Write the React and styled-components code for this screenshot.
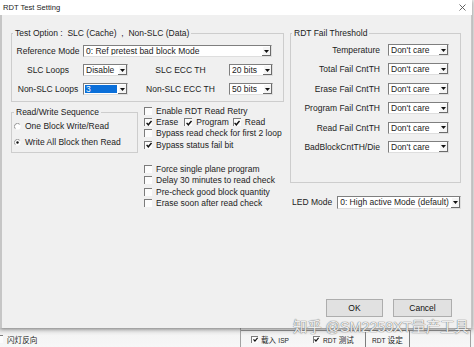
import React from "react";
import styled, { createGlobalStyle } from "styled-components";

const GlobalStyle = createGlobalStyle`
  html, body {
    margin: 0;
    padding: 0;
    background: #e9e9e9;
  }
  #root {
    width: 474px;
    height: 347px;
    overflow: hidden;
  }
`;

const uiFont = `"Liberation Sans", Arial, "Noto Sans CJK SC", sans-serif`;

const Screen = styled.div`
  position: relative;
  width: 474px;
  height: 347px;
  overflow: hidden;
  display: flex;
  flex-direction: column;
  font-family: ${uiFont};
  font-size: 8.5px;
  color: #1c1c1c;
  background: #ececec;
`;

const Dialog = styled.div`
  position: relative;
  z-index: 1;
  flex: none;
  width: 472px;
  height: 328px;
  display: flex;
  flex-direction: column;
  box-shadow: 0 1px 4px rgba(0, 0, 0, 0.45);
`;

const TitleBar = styled.div`
  height: 15px;
  background: #fff;
  display: flex;
  align-items: center;
  justify-content: space-between;
  padding: 0 6px 0 3px;
  font-size: 7.6px;
  color: #222;
`;

const Body = styled.div`
  flex: 1;
  background: #f0f0f0;
  border-left: 2px solid #c6c6c6;
  border-right: 1px solid #c6c6c6;
  padding: 13px 0 11px 9px;
  display: flex;
  flex-direction: column;
`;

const Columns = styled.div`
  display: flex;
  gap: 6px;
  align-items: flex-start;
`;

const Column = styled.div`
  width: ${(p) => p.$w}px;
  display: flex;
  flex-direction: column;
`;

const Group = styled.fieldset`
  box-sizing: border-box;
  margin: ${(p) => p.$margin || 0};
  min-width: 0;
  width: ${(p) => p.$w}px;
  border: 1px solid #cdcdcd;
  padding: ${(p) => p.$pad};
`;

const Legend = styled.legend`
  padding: 0 2px;
  font-size: 8.5px;
  line-height: 10px;
  color: #1c1c1c;
`;

const OptionGrid = styled.div`
  display: grid;
  grid-template-columns: 70px 45px 1fr 44px;
  row-gap: 7px;
  align-items: center;
`;

const GridLabel = styled.span`
  text-align: center;
  white-space: nowrap;
  padding-left: ${(p) => p.$shift || 0}px;
`;

const WideCell = styled.div`
  grid-column: 2 / 5;
`;

const LowerRow = styled.div`
  display: flex;
  gap: 6px;
  align-items: flex-start;
  margin-top: 4px;
`;

const RadioList = styled.div`
  display: flex;
  flex-direction: column;
  gap: 6.3px;
`;

const RadioRow = styled.label`
  height: 10px;
  display: flex;
  align-items: center;
  gap: 4px;
  white-space: nowrap;
`;

const CheckList = styled.div`
  display: flex;
  flex-direction: column;
  margin-top: -0.6px;
`;

const CheckRow = styled.div`
  height: 11.2px;
  display: flex;
  align-items: center;
  gap: 4px;
  white-space: nowrap;
  margin-top: ${(p) => p.$space || 0}px;
`;

const InlineCheck = styled.span`
  display: flex;
  align-items: center;
  gap: 4px;
  margin-right: ${(p) => p.$after || 0}px;
`;

const ThresholdGrid = styled.div`
  display: grid;
  grid-template-columns: 1fr 61px;
  column-gap: 8px;
  row-gap: 7.4px;
  align-items: center;
`;

const RightLabel = styled.span`
  text-align: right;
  white-space: nowrap;
`;

const LedRow = styled.div`
  display: flex;
  align-items: center;
  gap: 5px;
  margin-top: 13px;
  padding-left: 2px;
  white-space: nowrap;
`;

const LedLabel = styled.span`
  flex: none;
`;

const Footer = styled.div`
  margin-top: auto;
  display: flex;
  justify-content: flex-end;
  gap: 10px;
  padding-right: 19px;
`;

const PushButton = styled.button`
  box-sizing: border-box;
  width: ${(p) => p.$w}px;
  height: 18px;
  padding: 0;
  background: #e1e1e1;
  border: 1px solid #adadad;
  font-family: ${uiFont};
  font-size: 8.5px;
  color: #111;
`;

const ComboFrame = styled.div`
  box-sizing: border-box;
  flex: none;
  display: flex;
  width: ${(p) => p.$w}px;
  height: ${(p) => p.$h}px;
  background: #fff;
  border: 1px solid;
  border-color: #7f7f7f #dedede #dedede #7f7f7f;
`;

const ComboValue = styled.span`
  flex: 1;
  display: flex;
  align-items: center;
  margin: 1px;
  padding-left: 1px;
  white-space: nowrap;
  overflow: hidden;
  background: ${(p) => (p.$selected ? "#0b6fd9" : "transparent")};
  color: ${(p) => (p.$selected ? "#fff" : "inherit")};
`;

const DropButton = styled.span`
  flex: none;
  width: 9px;
  display: grid;
  place-items: center;
  background: #f5f5f5;
  box-shadow: inset -1px -1px #6b6b6b, inset 1px 1px #fff;
`;

const BoxFace = styled.span`
  box-sizing: border-box;
  flex: none;
  width: ${(p) => p.$size}px;
  height: ${(p) => p.$size}px;
  margin-left: ${(p) => p.$offset || 0}px;
  border-top: 1px solid #7b7b7b;
  border-left: 1px solid #7b7b7b;
  background: #fcfcfc;
  display: grid;
  place-items: center;
`;

const Under = styled.div`
  flex: 1;
  display: flex;
  background: linear-gradient(#dedede, #f4f4f4 40%, #f7f7f7);
  font-size: 7.6px;
  color: #222;
`;

const UnderLeft = styled.div`
  width: 240px;
  display: flex;
  align-items: center;
  gap: 4px;
  padding-top: 3px;
  border-right: 1px solid #a2a2a2;
`;

const UnderRight = styled.div`
  flex: 1;
  display: flex;
  align-items: center;
  margin: 2px 3px 0 0;
  padding-left: 10px;
  border-top: 1px solid #8e8e8e;
  border-right: 1px solid #a2a2a2;
`;

const UnderItem = styled.span`
  display: flex;
  align-items: center;
  gap: 3px;
  margin-right: ${(p) => p.$after}px;
  white-space: nowrap;
`;

const SmallLatin = styled.span`
  font-size: 6.6px;
`;

const TabButton = styled.span`
  box-sizing: border-box;
  align-self: stretch;
  width: 45px;
  margin-top: -1px;
  display: grid;
  place-items: center;
  background: #f6f6f6;
  border: 1px solid #7d7d7d;
  border-bottom: none;
`;

const Watermark = styled.div`
  position: absolute;
  z-index: 2;
  left: 293px;
  top: 319px;
  font-family: "Liberation Sans", "Noto Sans CJK SC", sans-serif;
  font-size: 14.3px;
  line-height: 17px;
  white-space: nowrap;
  color: rgba(255, 255, 255, 0.9);
  text-shadow: 0 0 1px #6f6f6f, 0 0 1px #6f6f6f;
`;

function Arrow() {
  return (
    <svg width="5" height="3" viewBox="0 0 5 3">
      <path d="M0 0 H5 L2.5 3 Z" fill="#111" />
    </svg>
  );
}

function Combo({ value, w, h = 12, selected }) {
  return (
    <ComboFrame $w={w} $h={h}>
      <ComboValue $selected={selected}>{value}</ComboValue>
      <DropButton>
        <Arrow />
      </DropButton>
    </ComboFrame>
  );
}

function Check({ checked, size = 8, offset }) {
  return (
    <BoxFace $size={size} $offset={offset}>
      {checked && (
        <svg width={size - 2} height={size - 2} viewBox="0 0 6 6">
          <path d="M0.6 2.9 L2.3 4.8 L5.5 0.9" fill="none" stroke="#111" strokeWidth="1.4" />
        </svg>
      )}
    </BoxFace>
  );
}

function Radio({ checked }) {
  return (
    <svg width="7" height="7" viewBox="0 0 14 14">
      <circle cx="7" cy="7" r="6.2" fill="#fff" />
      <path d="M11.4 2.6 A6.2 6.2 0 0 0 2.6 11.4" fill="none" stroke="#7a7a7a" strokeWidth="1.6" />
      {checked && <circle cx="7" cy="7" r="2.4" fill="#111" />}
    </svg>
  );
}

const thresholds = [
  "Temperature",
  "Total Fail CntTH",
  "Erase Fail CntTH",
  "Program Fail CntTH",
  "Read Fail CntTH",
  "BadBlockCntTH/Die",
];

export default function App() {
  return (
    <Screen>
      <GlobalStyle />
      <Dialog>
        <TitleBar>
          <span>RDT Test Setting</span>
          <svg width="7" height="7" viewBox="0 0 7 7">
            <path d="M0.5 0.5 L6.5 6.5 M6.5 0.5 L0.5 6.5" stroke="#555" strokeWidth="0.9" />
          </svg>
        </TitleBar>
        <Body>
          <Columns>
            <Column $w={273}>
              <Group $w={273} $pad="7px 10px 6px 1px">
                <Legend>Test Option :&nbsp; SLC (Cache)&nbsp; ,&nbsp; Non-SLC (Data)</Legend>
                <OptionGrid>
                  <GridLabel>Reference Mode</GridLabel>
                  <WideCell>
                    <Combo value="0: Ref pretest bad block Mode" w={189} />
                  </WideCell>
                  <GridLabel>SLC Loops</GridLabel>
                  <Combo value="Disable" w={45} />
                  <GridLabel $shift={4}>SLC ECC TH</GridLabel>
                  <Combo value="20 bits" w={44} />
                  <GridLabel>Non-SLC Loops</GridLabel>
                  <Combo value="3" w={45} selected />
                  <GridLabel $shift={4}>Non-SLC ECC TH</GridLabel>
                  <Combo value="50 bits" w={44} />
                </OptionGrid>
              </Group>
              <LowerRow>
                <Group $w={127} $margin="1px 0 0" $pad="4px 2px 5px 2px">
                  <Legend>Read/Write Sequence</Legend>
                  <RadioList>
                    <RadioRow>
                      <Radio />
                      One Block Write/Read
                    </RadioRow>
                    <RadioRow>
                      <Radio checked />
                      Write All Block then Read
                    </RadioRow>
                  </RadioList>
                </Group>
                <CheckList>
                  <CheckRow>
                    <Check />
                    Enable RDT Read Retry
                  </CheckRow>
                  <CheckRow>
                    <InlineCheck $after={2}>
                      <Check checked />
                      Erase
                    </InlineCheck>
                    <InlineCheck $after={0}>
                      <Check checked />
                      Program
                    </InlineCheck>
                    <InlineCheck $after={0}>
                      <Check checked />
                      Read
                    </InlineCheck>
                  </CheckRow>
                  <CheckRow>
                    <Check />
                    Bypass read check for first 2 loop
                  </CheckRow>
                  <CheckRow>
                    <Check checked />
                    Bypass status fail bit
                  </CheckRow>
                  <CheckRow $space={13.5}>
                    <Check />
                    Force single plane program
                  </CheckRow>
                  <CheckRow>
                    <Check />
                    Delay 30 minutes to read check
                  </CheckRow>
                  <CheckRow>
                    <Check />
                    Pre-check good block quantity
                  </CheckRow>
                  <CheckRow>
                    <Check />
                    Erase soon after read check
                  </CheckRow>
                </CheckList>
              </LowerRow>
            </Column>
            <Column $w={171}>
              <Group $w={171} $pad="6px 11px 29px 1px">
                <Legend>RDT Fail Threshold</Legend>
                <ThresholdGrid>
                  {thresholds.map((label) => (
                    <React.Fragment key={label}>
                      <RightLabel>{label}</RightLabel>
                      <Combo value="Don't care" w={61} />
                    </React.Fragment>
                  ))}
                </ThresholdGrid>
              </Group>
              <LedRow>
                <LedLabel>LED Mode</LedLabel>
                <Combo value="0: High active Mode (default)" w={124} h={13} />
              </LedRow>
            </Column>
          </Columns>
          <Footer>
            <PushButton $w={57}>OK</PushButton>
            <PushButton $w={59}>Cancel</PushButton>
          </Footer>
        </Body>
      </Dialog>
      <Under>
        <UnderLeft>
          <Check size={8} offset={-5} />
          <span>闪灯反向</span>
        </UnderLeft>
        <UnderRight>
          <UnderItem $after={24}>
            <Check checked size={7} />
            <span>
              载入 <SmallLatin>ISP</SmallLatin>
            </span>
          </UnderItem>
          <UnderItem $after={11}>
            <Check checked size={7} />
            <span>
              <SmallLatin>RDT</SmallLatin> 测试
            </span>
          </UnderItem>
          <TabButton>
            <span>
              <SmallLatin>RDT</SmallLatin> 设定
            </span>
          </TabButton>
        </UnderRight>
      </Under>
      <Watermark>知乎 @SM2259XT量产工具</Watermark>
    </Screen>
  );
}
